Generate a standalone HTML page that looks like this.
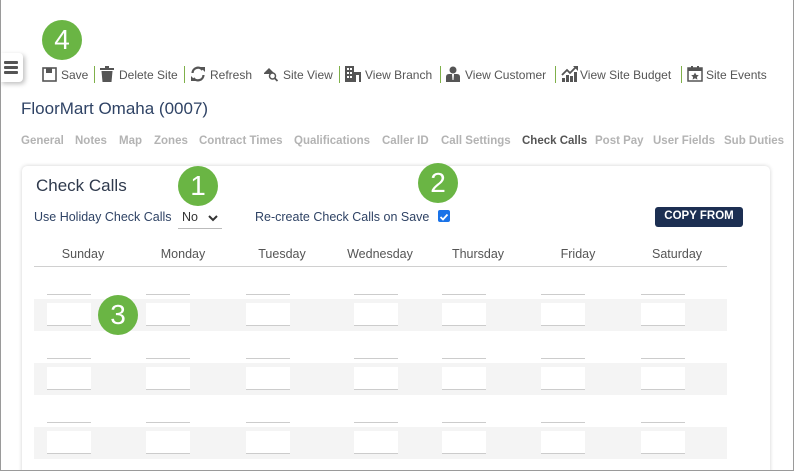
<!DOCTYPE html>
<html style="width:794px;height:471px;overflow:hidden"><head><style>
*{margin:0;padding:0;box-sizing:border-box}
body{width:794px;height:471px;position:relative;overflow:hidden;background:#fff;font-family:"Liberation Sans",sans-serif}
.a{position:absolute;white-space:nowrap}
.frame{position:absolute;left:0;top:0;width:794px;height:471px;border:1px solid #9a9a9a;border-top:none;z-index:5;pointer-events:none}
.tb{font-size:12px;color:#555;top:68px}
.sep{position:absolute;top:66px;width:1px;height:17px;background:#7fb04a}
.tab{top:135px;font-size:11.5px;font-weight:bold;color:#b3b3b3}
.badge{position:absolute;width:40px;height:40px;border-radius:50%;background:#6ab544;color:#fff;font-size:28px;text-align:center;line-height:40px}
.day{top:247px;font-size:12.5px;color:#555;transform:translateX(-50%)}
.band{position:absolute;left:34px;width:693px;height:32px;background:#f4f4f4}
.in{position:absolute;width:44px;height:23px;background:#fff;border-bottom:1px solid #ccc}
.ln{position:absolute;width:44px;height:1px;background:#ccc}
</style></head><body>
<div class="frame"></div>
<div class="a" style="left:0;top:53px;width:23px;height:29px;background:#fff;border-radius:0 4px 4px 0;box-shadow:2px 2px 5px rgba(0,0,0,.25)">
<div style="position:absolute;left:4px;top:8px;width:14px;height:2.5px;background:#555;border-radius:1px"></div>
<div style="position:absolute;left:4px;top:13px;width:14px;height:2.5px;background:#555;border-radius:1px"></div>
<div style="position:absolute;left:4px;top:18px;width:14px;height:2.5px;background:#555;border-radius:1px"></div>
</div>
<svg class="a" style="left:42px;top:67px" width="15" height="15" viewBox="0 0 15 15"><rect x="1" y="1" width="13" height="13" fill="none" stroke="#555" stroke-width="1.6"/><rect x="4" y="1" width="6" height="5" fill="#555"/></svg>
<div class="a tb" style="left:61px">Save</div><div class="sep" style="left:94px"></div>
<svg class="a" style="left:100px;top:66px" width="14" height="16" viewBox="0 0 14 16"><rect x="0" y="2" width="14" height="2" fill="#555"/><rect x="5" y="0" width="4" height="2" fill="#555"/><path d="M1.5 5h11l-1 11h-9z" fill="#555"/></svg>
<div class="a tb" style="left:119px">Delete Site</div><div class="sep" style="left:184px"></div>
<svg class="a" style="left:190px;top:66px" width="16" height="16" viewBox="0 0 16 16"><path d="M2.5 7A5.5 5.5 0 0 1 12.5 4" fill="none" stroke="#555" stroke-width="2.2"/><path d="M10 1h5v5z" fill="#555"/><path d="M13.5 9A5.5 5.5 0 0 1 3.5 12" fill="none" stroke="#555" stroke-width="2.2"/><path d="M6 15H1v-5z" fill="#555"/></svg>
<div class="a tb" style="left:210px">Refresh</div>
<svg class="a" style="left:263px;top:66px" width="16" height="16" viewBox="0 0 16 16"><path d="M1 7L6 2l5 5v1H1z" fill="#555"/><circle cx="9.5" cy="10" r="3" fill="#fff" stroke="#555" stroke-width="1.5"/><path d="M11.5 12l3 3" stroke="#555" stroke-width="1.8"/></svg>
<div class="a tb" style="left:283px">Site View</div><div class="sep" style="left:339px"></div>
<svg class="a" style="left:345px;top:66px" width="16" height="16" viewBox="0 0 16 16"><rect x="0" y="0" width="9" height="16" fill="#555"/><rect x="9" y="6" width="7" height="10" fill="#555"/><g fill="#fff"><rect x="2" y="2" width="2" height="2"/><rect x="5" y="2" width="2" height="2"/><rect x="2" y="6" width="2" height="2"/><rect x="5" y="6" width="2" height="2"/><rect x="2" y="10" width="2" height="2"/><rect x="5" y="10" width="2" height="2"/><rect x="11" y="9" width="3" height="7"/></g></svg>
<div class="a tb" style="left:365px">View Branch</div><div class="sep" style="left:440px"></div>
<svg class="a" style="left:446px;top:66px" width="14" height="16" viewBox="0 0 14 16"><circle cx="7" cy="4" r="3.5" fill="#555"/><path d="M0 16v-5q0-3 3-3h8q3 0 3 3v5z" fill="#555"/><path d="M6 8h2l-0.5 6h-1z" fill="#fff"/></svg>
<div class="a tb" style="left:465px">View Customer</div><div class="sep" style="left:555px"></div>
<svg class="a" style="left:561px;top:66px" width="17" height="16" viewBox="0 0 17 16"><path d="M1 9l5-5 3 3 6-6" fill="none" stroke="#555" stroke-width="1.8"/><path d="M12 0h5v5z" fill="#555"/><rect x="1" y="12" width="3" height="4" fill="#555"/><rect x="5" y="9" width="3" height="7" fill="#555"/><rect x="9" y="10" width="3" height="6" fill="#555"/><rect x="13" y="6" width="3" height="10" fill="#555"/></svg>
<div class="a tb" style="left:580px">View Site Budget</div><div class="sep" style="left:681px"></div>
<svg class="a" style="left:687px;top:66px" width="16" height="16" viewBox="0 0 16 16"><rect x="1" y="2" width="14" height="13" fill="none" stroke="#555" stroke-width="1.5"/><rect x="1" y="2" width="14" height="3" fill="#555"/><rect x="4" y="0" width="2" height="3" fill="#555"/><rect x="10" y="0" width="2" height="3" fill="#555"/><path d="M8 6.5l1.2 2.4 2.6.3-1.9 1.8.5 2.6L8 12.3l-2.4 1.3.5-2.6-1.9-1.8 2.6-.3z" fill="#555"/></svg>
<div class="a tb" style="left:706px">Site Events</div>
<div class="a" style="left:21px;top:99px;font-size:17px;color:#2f4365">FloorMart Omaha (0007)</div>
<div class="a tab" style="left:21px">General</div>
<div class="a tab" style="left:75px">Notes</div>
<div class="a tab" style="left:119px">Map</div>
<div class="a tab" style="left:154px">Zones</div>
<div class="a tab" style="left:199px">Contract Times</div>
<div class="a tab" style="left:294px">Qualifications</div>
<div class="a tab" style="left:382px">Caller ID</div>
<div class="a tab" style="left:441px">Call Settings</div>
<div class="a tab" style="left:522px;color:#555">Check Calls</div>
<div class="a tab" style="left:595px">Post Pay</div>
<div class="a tab" style="left:653px">User Fields</div>
<div class="a tab" style="left:724px">Sub Duties</div>
<div class="a" style="left:22px;top:166px;width:748px;height:310px;border-radius:5px;background:#fff;box-shadow:0 0 4px rgba(0,0,0,.18)"></div>
<div class="a" style="left:36px;top:176px;font-size:17px;color:#2f3a4d">Check Calls</div>
<div class="a" style="left:34px;top:210px;font-size:12.5px;color:#2f4365">Use Holiday Check Calls</div>
<div class="a" style="left:178px;top:210px;width:44px;height:19px;border-bottom:1px solid #bbb;font-size:12.5px;color:#333;padding-left:4px">No<svg style="position:absolute;left:30px;top:5px" width="10" height="7" viewBox="0 0 10 7"><path d="M1 1l4 4 4-4" fill="none" stroke="#333" stroke-width="2"/></svg></div>
<div class="a" style="left:255px;top:210px;font-size:12.5px;color:#2f4365">Re-create Check Calls on Save</div>
<div class="a" style="left:438px;top:210px;width:12px;height:12px;background:#1a73e8;border-radius:2px"><svg width="12" height="12" viewBox="0 0 12 12"><path d="M2.5 6l2.5 2.5 4.5-5" fill="none" stroke="#fff" stroke-width="1.8"/></svg></div>
<div class="a" style="left:655px;top:207px;width:88px;height:20px;background:#1c2f52;border-radius:3px;color:#fff;font-size:11.5px;font-weight:bold;text-align:center;line-height:19px">COPY FROM</div>
<div class="a day" style="left:83px">Sunday</div>
<div class="a day" style="left:183px">Monday</div>
<div class="a day" style="left:282px">Tuesday</div>
<div class="a day" style="left:380px">Wednesday</div>
<div class="a day" style="left:478px">Thursday</div>
<div class="a day" style="left:578px">Friday</div>
<div class="a day" style="left:677px">Saturday</div>
<div class="a" style="left:34px;top:266px;width:693px;height:1px;background:#d0d0d0"></div>
<div class="band" style="top:299px"></div>
<div class="band" style="top:363px"></div>
<div class="band" style="top:427px"></div>
<div id="cells"></div>
<script>
var xs=[47,146,246,354,442,541,641],tops=[299,363,427],h='';
tops.forEach(function(t){xs.forEach(function(x){h+='<div class="ln" style="left:'+x+'px;top:'+(t-5)+'px"></div><div class="in" style="left:'+x+'px;top:'+(t+4)+'px"></div>';});});
document.getElementById('cells').innerHTML=h;
</script>
<div class="badge" style="left:42px;top:20px">4</div>
<div class="badge" style="left:178px;top:166px">1</div>
<div class="badge" style="left:418px;top:163px">2</div>
<div class="badge" style="left:98px;top:295px">3</div>
</body></html>
